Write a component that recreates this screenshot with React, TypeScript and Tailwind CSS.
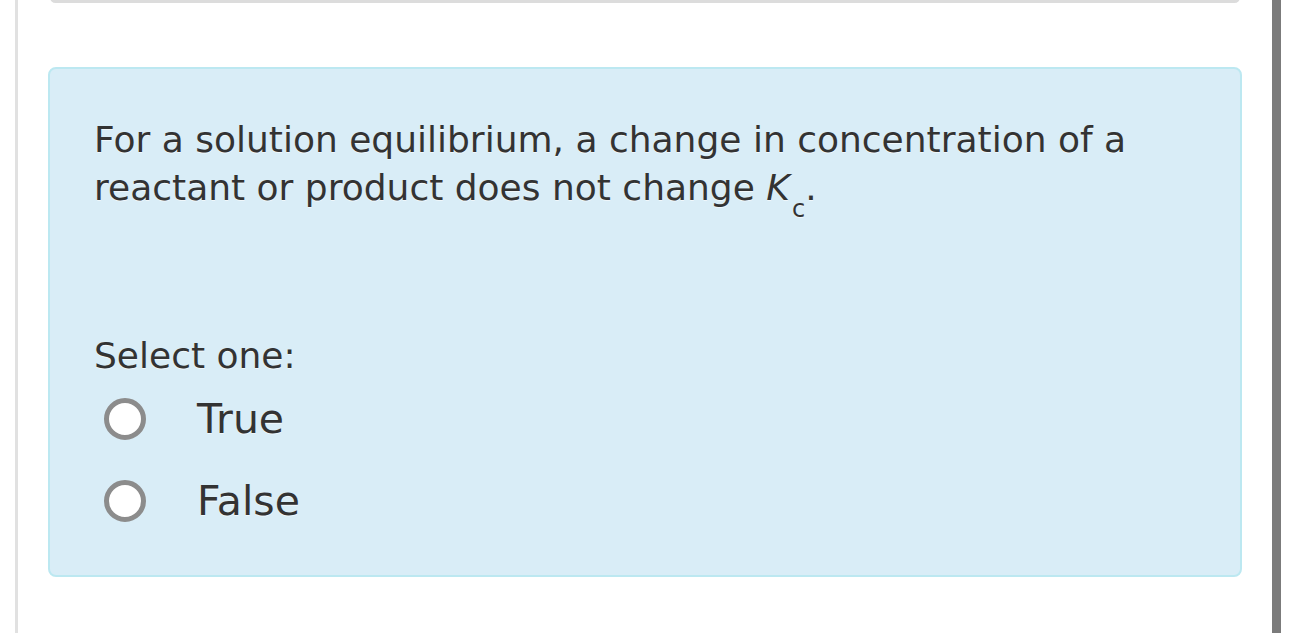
export default function App() {
  const font = { fontFamily: '"DejaVu Sans", Verdana, sans-serif' };
  return (
    <div className="flex h-[633px] w-[1290px] overflow-hidden bg-white text-[#333]" style={font}>
      <div className="w-[15px] shrink-0" />
      <div className="w-[1257px] shrink-0 border-l-[3px] border-[#e1e1e1]">
        {/* previous card, only its bottom edge shows */}
        <div className="ml-[32px] -mt-[8px] h-[11px] w-[1190px] rounded-md border-[3px] border-[#dcdcdc]" />

        {/* question box */}
        <div className="ml-[30px] mt-[64px] h-[510px] w-[1194px] rounded-lg border-2 border-[#bce8f1] bg-[#d9edf7] pl-[44px] pr-[60px] pt-[47px] [text-shadow:0_1px_0_rgba(255,255,255,0.6)]">
          <p className="text-[36px] leading-[48px]">
            For a solution equilibrium, a change in concentration of a reactant or product does not change{' '}
            <i>K</i>
            <span className="relative top-[17px] ml-[2px] text-[24px]">c</span>.
          </p>

          <p className="mt-[116px] text-[36px] leading-[48px]">Select one:</p>

          <div className="mt-[15px] flex flex-col gap-[34px]">
            {['True', 'False'].map((label) => (
              <label key={label} className="flex items-center">
                <span className="ml-[10px] h-[42px] w-[42px] rounded-full border-[5px] border-[#8c8c8c] bg-white" />
                <span className="ml-[51px] text-[41px] leading-[48px]">{label}</span>
              </label>
            ))}
          </div>
        </div>
      </div>
      <div className="w-[9px] shrink-0 bg-[#7b7b7b]" />
    </div>
  );
}
